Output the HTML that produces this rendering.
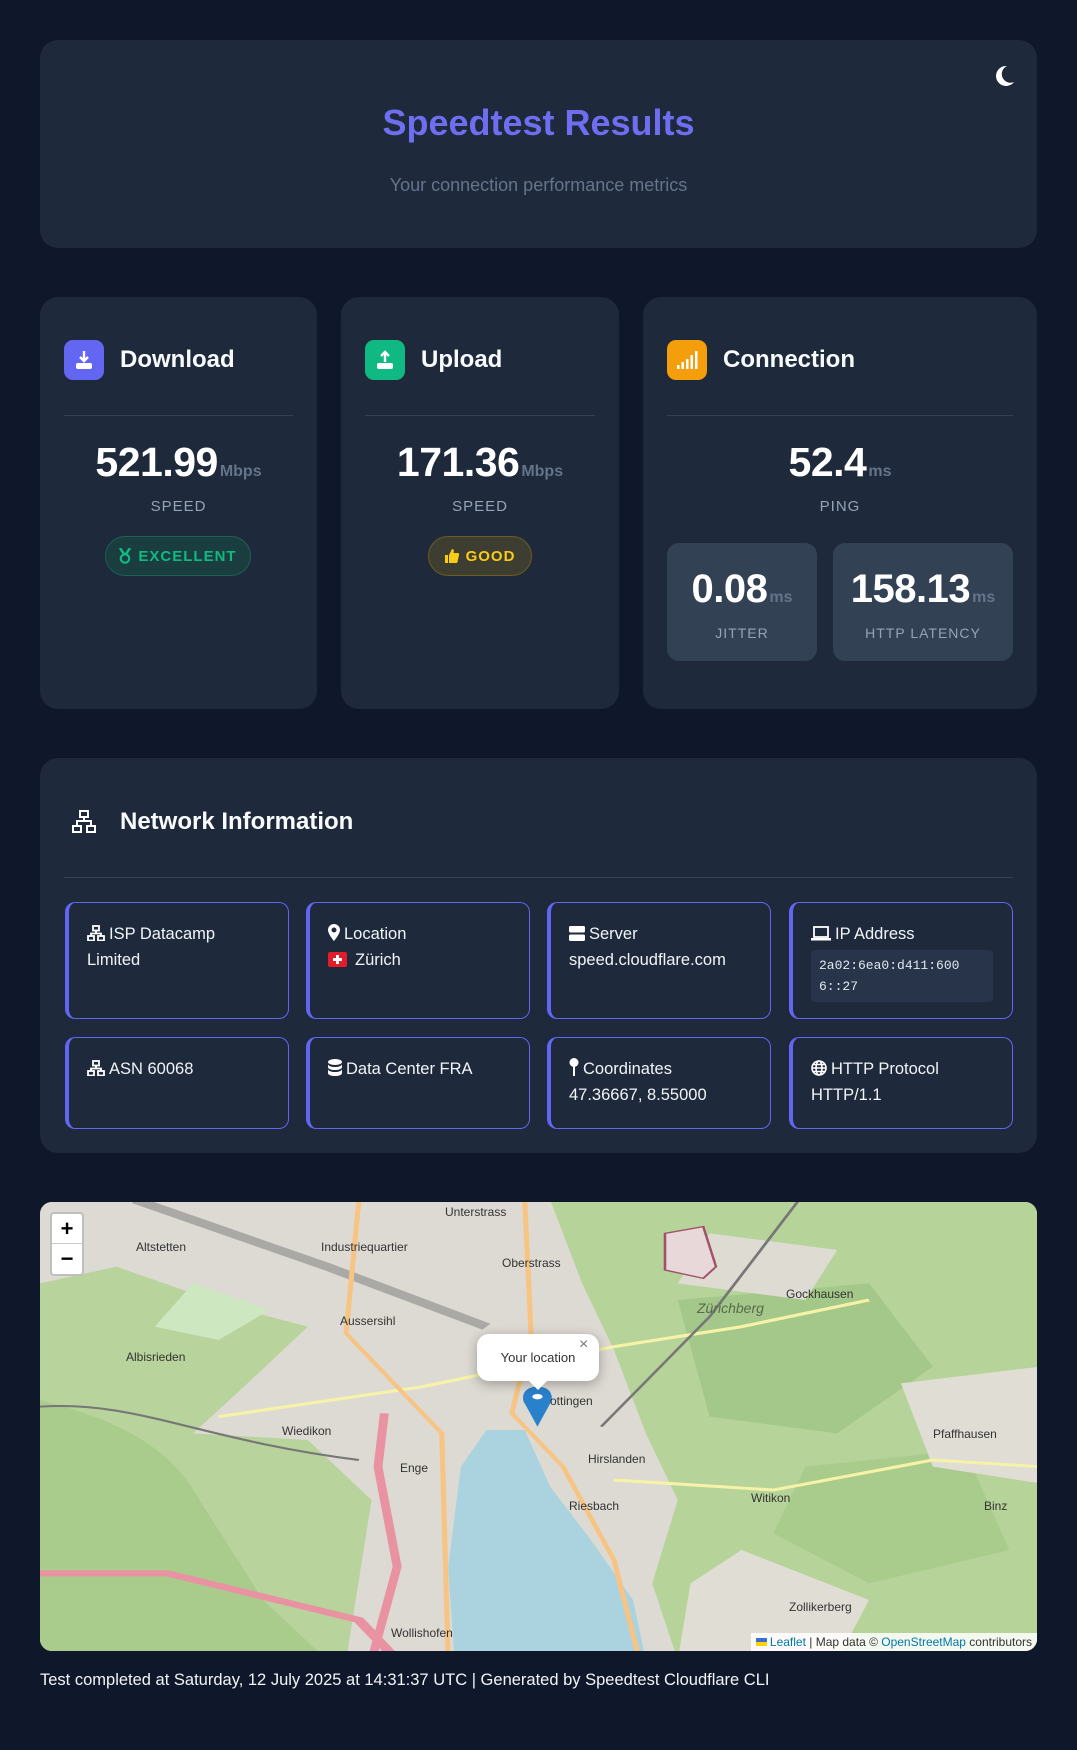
<!DOCTYPE html>
<html><head><meta charset="utf-8"><style>
*{box-sizing:border-box;margin:0;padding:0}
body{width:1077px;height:1750px;background:#0f172a;font-family:"Liberation Sans",sans-serif;color:#f1f5f9;position:relative;overflow:hidden}
.card{position:absolute;background:#1e293b;border-radius:18px}
.abs{position:absolute}
.ico{position:absolute;width:40px;height:40px;border-radius:9px;display:flex;align-items:center;justify-content:center}
.ct{position:absolute;font-size:24px;font-weight:bold;color:#f8fafc}
.div{position:absolute;height:1px;background:#334155}
.val{position:absolute;text-align:center;font-weight:bold;font-size:41px;color:#fff;white-space:nowrap;letter-spacing:-0.5px}
.val small{font-size:16px;color:#64748b;font-weight:bold;margin-left:2px;letter-spacing:0}
.lbl{position:absolute;text-align:center;font-size:15px;color:#94a3b8;letter-spacing:1px}
.badge{position:absolute;height:40px;border-radius:20px;font-size:15px;font-weight:bold;letter-spacing:1px;display:flex;align-items:center;justify-content:center;gap:7px}
.sub{position:absolute;background:#334155;border-radius:12px}
.ib{position:absolute;border:1px solid #6366f1;border-left:4px solid #6366f1;border-radius:10px;background:#1e293b;padding:18px 0 0 18px;font-size:16.5px;line-height:26px;color:#f1f5f9}
.ib svg{vertical-align:-2px;margin-right:4px}
.ml{position:absolute;font-size:12px;color:#333;white-space:nowrap}
</style></head><body>

<div class="card" style="left:40px;top:40px;width:997px;height:208px">
  <svg class="abs" style="left:952px;top:24px" width="24" height="24" viewBox="0 0 24 24"><path d="M15 2a10 10 0 1 0 7 16 8 8 0 0 1-7-16z" fill="#fff"/></svg>
  <div class="abs" style="left:0;width:997px;top:62px;text-align:center;font-size:36px;font-weight:bold;color:#6f6ef0">Speedtest Results</div>
  <div class="abs" style="left:0;width:997px;top:135px;text-align:center;font-size:18px;color:#64748b">Your connection performance metrics</div>
</div>

<!-- Download -->
<div class="card" style="left:40px;top:297px;width:277px;height:412px">
  <div class="ico" style="left:24px;top:43px;background:#6366f1"><svg width="22" height="22" viewBox="0 0 22 22"><path d="M11 2v10M7 8l4 4 4-4" stroke="#fff" stroke-width="2.4" fill="none"/><rect x="3" y="14" width="16" height="6" rx="2" fill="#fff"/></svg></div>
  <div class="ct" style="left:80px;top:49px">Download</div>
  <div class="div" style="left:24px;right:24px;top:118px"></div>
  <div class="val" style="left:0;width:277px;top:142px">521.99<small>Mbps</small></div>
  <div class="lbl" style="left:0;width:277px;top:201px">SPEED</div>
  <div class="badge" style="left:65px;top:239px;width:146px;background:#1a3d3f;border:1px solid #1f5f55;color:#10b981"><svg width="12" height="16" viewBox="0 0 12 16"><path d="M1 0l4 6M11 0L7 6" stroke="#10b981" stroke-width="2.5"/><circle cx="6" cy="10.5" r="4.2" fill="none" stroke="#10b981" stroke-width="2.2"/></svg>EXCELLENT</div>
</div>

<!-- Upload -->
<div class="card" style="left:341px;top:297px;width:278px;height:412px">
  <div class="ico" style="left:24px;top:43px;background:#10b981"><svg width="22" height="22" viewBox="0 0 22 22"><path d="M11 13V3M7 7l4-4 4 4" stroke="#fff" stroke-width="2.4" fill="none"/><rect x="3" y="14" width="16" height="6" rx="2" fill="#fff"/></svg></div>
  <div class="ct" style="left:80px;top:49px">Upload</div>
  <div class="div" style="left:24px;right:24px;top:118px"></div>
  <div class="val" style="left:0;width:278px;top:142px">171.36<small>Mbps</small></div>
  <div class="lbl" style="left:0;width:278px;top:201px">SPEED</div>
  <div class="badge" style="left:87px;top:239px;width:104px;background:#3d3d32;border:1px solid #6b5e1c;color:#facc15"><svg width="14" height="14" viewBox="0 0 14 14"><rect x="0" y="6" width="3" height="8" fill="#facc15"/><path d="M4 6L7 0c2 0 2 2 1.5 4H13c1 0 1.2 1 1 2l-1.5 7c-.2.7-.7 1-1.3 1H4z" fill="#facc15"/></svg>GOOD</div>
</div>

<!-- Connection -->
<div class="card" style="left:643px;top:297px;width:394px;height:412px">
  <div class="ico" style="left:24px;top:43px;background:#f59e0b"><svg width="24" height="22" viewBox="0 0 24 22"><g fill="#fff"><rect x="2" y="16" width="2.5" height="4"/><rect x="6.5" y="13" width="2.5" height="7"/><rect x="11" y="10" width="2.5" height="10"/><rect x="15.5" y="6" width="2.5" height="14"/><rect x="20" y="2" width="2.5" height="18"/></g></svg></div>
  <div class="ct" style="left:80px;top:49px">Connection</div>
  <div class="div" style="left:24px;right:24px;top:118px"></div>
  <div class="val" style="left:0;width:394px;top:142px">52.4<small>ms</small></div>
  <div class="lbl" style="left:0;width:394px;top:201px">PING</div>
  <div class="sub" style="left:24px;top:246px;width:150px;height:118px">
    <div class="val" style="left:0;width:150px;top:24px;font-size:40px">0.08<small>ms</small></div>
    <div class="lbl" style="left:0;width:150px;top:82px;font-size:14px">JITTER</div>
  </div>
  <div class="sub" style="left:190px;top:246px;width:180px;height:118px">
    <div class="val" style="left:0;width:180px;top:24px;font-size:40px">158.13<small>ms</small></div>
    <div class="lbl" style="left:0;width:180px;top:82px;font-size:14px">HTTP LATENCY</div>
  </div>
</div>

<!-- Network -->
<div class="card" style="left:40px;top:758px;width:997px;height:395px">
  <svg class="abs" style="left:31px;top:52px" width="26" height="24" viewBox="0 0 26 24"><g fill="none" stroke="#fff" stroke-width="2"><rect x="9" y="1" width="8" height="6"/><rect x="2" y="16" width="8" height="6"/><rect x="16" y="16" width="8" height="6"/><path d="M13 7v4M6 16v-5h14v5"/></g></svg>
  <div class="ct" style="left:80px;top:50px">Network Information</div>
  <div class="div" style="left:24px;right:24px;top:119px"></div>
</div>
<svg width="0" height="0" style="position:absolute"><defs>
<g id="net"><g fill="none" stroke="#fff" stroke-width="1.8"><rect x="6" y="1" width="6" height="4.5"/><rect x="1" y="11" width="6" height="4.5"/><rect x="11" y="11" width="6" height="4.5"/><path d="M9 5.5v3M4 11V8.5h10V11"/></g></g>
</defs></svg>
<div class="ib" style="left:65px;top:902px;width:224px;height:117px"><svg width="18" height="16" viewBox="0 0 18 16"><use href="#net"/></svg>ISP Datacamp<br>Limited</div>
<div class="ib" style="left:306px;top:902px;width:224px;height:117px"><svg width="12" height="17" viewBox="0 0 12 17"><path d="M6 0a6 6 0 0 0-6 6c0 4 6 11 6 11s6-7 6-11a6 6 0 0 0-6-6zm0 3.5a2.5 2.5 0 1 1 0 5 2.5 2.5 0 0 1 0-5z" fill="#fff"/></svg>Location<br><span style="display:inline-block;width:19px;height:15px;background:#e11d2a;border-radius:2px;position:relative;vertical-align:-2px;margin-right:8px"><span style="position:absolute;left:8px;top:3px;width:3px;height:9px;background:#fff"></span><span style="position:absolute;left:5px;top:6px;width:9px;height:3px;background:#fff"></span></span>Zürich</div>
<div class="ib" style="left:547px;top:902px;width:224px;height:117px"><svg width="16" height="15" viewBox="0 0 16 15"><rect x="0" y="0" width="16" height="6.5" rx="1.5" fill="#fff"/><rect x="0" y="8.5" width="16" height="6.5" rx="1.5" fill="#fff"/></svg>Server<br>speed.cloudflare.com</div>
<div class="ib" style="left:789px;top:902px;width:224px;height:117px"><svg width="20" height="15" viewBox="0 0 20 15"><rect x="3" y="1" width="14" height="10" fill="none" stroke="#fff" stroke-width="1.8"/><rect x="0" y="12" width="20" height="2.5" fill="#fff"/></svg>IP Address
  <div style="margin-top:3px;width:182px;height:52px;background:#273449;border-radius:4px;font-family:'Liberation Mono',monospace;font-size:13px;line-height:21px;padding:5px 8px;color:#e2e8f0">2a02:6ea0:d411:600<br>6::27</div></div>
<div class="ib" style="left:65px;top:1037px;width:224px;height:92px"><svg width="18" height="16" viewBox="0 0 18 16"><use href="#net"/></svg>ASN 60068</div>
<div class="ib" style="left:306px;top:1037px;width:224px;height:92px"><svg width="14" height="17" viewBox="0 0 14 17"><ellipse cx="7" cy="3" rx="7" ry="3" fill="#fff"/><path d="M0 5c0 4 14 4 14 0v3c0 4-14 4-14 0zM0 10c0 4 14 4 14 0v4c0 4-14 4-14 0z" fill="#fff"/></svg>Data Center FRA</div>
<div class="ib" style="left:547px;top:1037px;width:224px;height:92px"><svg width="10" height="18" viewBox="0 0 10 18"><circle cx="5" cy="4.5" r="4.5" fill="#fff"/><rect x="4" y="8" width="2" height="10" fill="#fff"/></svg>Coordinates<br>47.36667, 8.55000</div>
<div class="ib" style="left:789px;top:1037px;width:224px;height:92px"><svg width="16" height="16" viewBox="0 0 16 16"><g fill="none" stroke="#fff" stroke-width="1.6"><circle cx="8" cy="8" r="7"/><ellipse cx="8" cy="8" rx="3" ry="7"/><path d="M1 8h14M2 4.5h12M2 11.5h12"/></g></svg>HTTP Protocol<br>HTTP/1.1</div>

<!-- Map -->
<div class="abs" style="left:40px;top:1202px;width:997px;height:449px;border-radius:12px;overflow:hidden;background:#dcdad2">
  <svg class="abs" style="left:0;top:-2px" width="1000" height="460" viewBox="0 0 1568 1380" preserveAspectRatio="none">
    <rect width="1568" height="1380" fill="#dddad3"/>
    <path d="M0 250 L120 200 L300 320 L420 380 L320 560 L240 700 L420 720 L520 900 L480 1380 L0 1380Z" fill="#b8d49c"/>
    <path d="M0 600 C100 650 200 720 250 900 L350 1200 L450 1380 L0 1380Z" fill="#a9cb8c"/>
    <path d="M800 0 L1568 0 L1568 1380 L1000 1380 L960 1150 L1000 900 L950 700 L900 450 L850 250Z" fill="#b6d39a"/>
    <path d="M1000 300 L1300 250 L1400 500 L1250 700 L1050 650Z" fill="#a4c889"/>
    <path d="M1200 800 L1450 750 L1520 1050 L1300 1150 L1150 1000Z" fill="#a9cc8d"/>
    <path d="M1100 1050 L1300 1200 L1250 1380 L1000 1380 L1020 1150Z" fill="#e0ddd5"/>
    <path d="M1350 550 L1568 500 L1568 850 L1400 800Z" fill="#e0ddd5"/>
    <path d="M1050 100 L1250 150 L1200 300 L1000 250Z" fill="#dedbd3"/>
    <path d="M240 250 L360 330 L280 420 L180 380Z" fill="#cde8c0"/>
    <path d="M700 690 L760 690 L800 860 L860 1010 L930 1200 L950 1380 L650 1380 L640 1100 L660 800Z" fill="#aad3df"/>
    <path d="M0 1120 L200 1120 L500 1260 L560 1380" stroke="#e892a2" stroke-width="18" fill="none"/>
    <path d="M540 640 L530 800 L560 1100 L520 1380" stroke="#e892a2" stroke-width="14" fill="none"/>
    <path d="M150 0 L450 200 L700 380" stroke="#888" stroke-width="22" fill="none" opacity=".6"/>
    <path d="M0 620 C150 600 250 720 500 780" stroke="#777" stroke-width="6" fill="none"/>
    <path d="M280 650 L600 560 L900 440 L1100 380 L1300 300" stroke="#f6f3a8" stroke-width="9" fill="none"/>
    <path d="M900 840 L1150 870 L1400 780 L1568 800" stroke="#f6f3a8" stroke-width="9" fill="none"/>
    <path d="M760 0 L770 400 L740 640 L820 800 L900 1080 L940 1380" stroke="#f7c484" stroke-width="8" fill="none"/>
    <path d="M500 0 L480 400 L560 560 L630 700 L640 1380" stroke="#f7c484" stroke-width="8" fill="none"/>
    <path d="M1190 0 L1050 350 L880 680" stroke="#777" stroke-width="5" fill="none"/>
    <path d="M980 100 L1040 80 L1060 200 L1040 235 L980 210Z" fill="#e8d8da" stroke="#a0526a" stroke-width="4"/>
    <path d="M780 560 C755 560 755 600 760 610 L780 680 L800 610 C805 600 805 560 780 560Z" fill="#2a81cb"/>
    <circle cx="780" cy="590" r="8" fill="#fff"/>
  </svg>
  <div class="ml" style="left:96px;top:38px">Altstetten</div>
  <div class="ml" style="left:281px;top:38px">Industriequartier</div>
  <div class="ml" style="left:405px;top:3px">Unterstrass</div>
  <div class="ml" style="left:462px;top:54px">Oberstrass</div>
  <div class="ml" style="left:746px;top:85px">Gockhausen</div>
  <div class="ml" style="left:300px;top:112px">Aussersihl</div>
  <div class="ml" style="left:86px;top:148px">Albisrieden</div>
  <div class="ml" style="left:242px;top:222px">Wiedikon</div>
  <div class="ml" style="left:360px;top:259px">Enge</div>
  <div class="ml" style="left:548px;top:250px">Hirslanden</div>
  <div class="ml" style="left:529px;top:297px">Riesbach</div>
  <div class="ml" style="left:711px;top:289px">Witikon</div>
  <div class="ml" style="left:893px;top:225px">Pfaffhausen</div>
  <div class="ml" style="left:749px;top:398px">Zollikerberg</div>
  <div class="ml" style="left:351px;top:424px">Wollishofen</div>
  <div class="ml" style="left:510px;top:192px">ottingen</div>
  <div class="ml" style="left:944px;top:297px">Binz</div>
  <div class="ml" style="left:657px;top:98px;font-size:14px;font-style:italic;color:#5a6a4a">Zürichberg</div>
  <div class="abs" style="left:437px;top:132px;width:122px;height:47px;background:#fff;border-radius:12px;box-shadow:0 3px 12px rgba(0,0,0,.3);font-size:13px;color:#333;text-align:center;line-height:47px">Your location</div>
  <div class="abs" style="left:488px;top:178px;width:0;height:0;border-left:10px solid transparent;border-right:10px solid transparent;border-top:10px solid #fff"></div>
  <div class="abs" style="left:539px;top:134px;font-size:16px;color:#777">×</div>
  <div class="abs" style="left:10px;top:10px;width:34px;height:64px;background:#fff;border:2px solid rgba(0,0,0,.25);border-radius:4px;font-size:22px;font-weight:bold;color:#000;text-align:center;line-height:29px">+<div style="border-top:1px solid #ccc">−</div></div>
  <div class="abs" style="right:0;bottom:0;background:rgba(255,255,255,.85);font-size:12px;color:#333;padding:2px 5px"><span style="display:inline-block;width:11px;height:8px;background:linear-gradient(#3b6fd6 50%,#ffd500 50%);margin-right:3px"></span><span style="color:#0078a8">Leaflet</span> | Map data © <span style="color:#0078a8">OpenStreetMap</span> contributors</div>
</div>

<div class="abs" style="left:40px;top:1671px;font-size:16.5px;color:#f1f5f9">Test completed at Saturday, 12 July 2025 at 14:31:37 UTC | Generated by Speedtest Cloudflare CLI</div>
</body></html>
